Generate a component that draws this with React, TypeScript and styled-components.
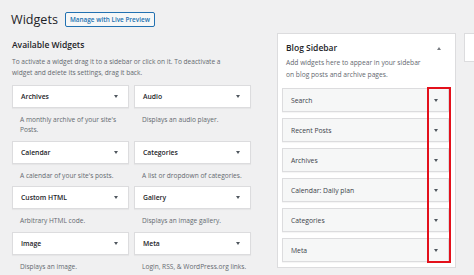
import React from 'react';
import styled, { createGlobalStyle } from 'styled-components';

const GlobalStyle = createGlobalStyle`
    html, body {
        margin: 0;
        padding: 0;
        background: #f0f0f1;
        overflow: hidden;
    }
    body {
        font-family: "Open Sans", "Liberation Sans", sans-serif;
        color: #1d2327;
    }
`;

const Page = styled.div`
    width: 474px;
    height: 275px;
    padding: 12px 0 0 11px;
    box-sizing: border-box;
    overflow: hidden;
`;

const Header = styled.div`
    display: flex;
    align-items: center;
    height: 15px;
`;

const Title = styled.h1`
    margin: 0 7px 0 0;
    font-size: 12.6px;
    font-weight: 400;
    line-height: 15px;
    color: #1d2327;
`;

const PreviewButton = styled.button`
    height: 15px;
    padding: 0 4px;
    border: 1px solid #2271b1;
    border-radius: 2px;
    background: #f6f7f7;
    color: #2271b1;
    font-family: inherit;
    font-size: 6.4px;
    font-weight: 600;
    line-height: 13px;
    box-sizing: border-box;
`;

const Columns = styled.div`
    display: flex;
    align-items: flex-start;
    margin-top: 6px;
`;

const LeftColumn = styled.div`
    width: 239px;
    flex-shrink: 0;
    padding: 6px 0 0 1px;
`;

const SectionTitle = styled.h2`
    margin: 0;
    font-size: 8.5px;
    font-weight: 600;
    line-height: 12px;
    color: #1d2327;
`;

const Intro = styled.p`
    margin: 5px 0 0;
    font-size: 6.6px;
    line-height: 11px;
    color: #646970;
`;

const WidgetGrid = styled.div`
    display: grid;
    grid-template-columns: 117px 117px;
    column-gap: 5px;
    margin-top: 7px;
`;

const WidgetCell = styled.div`
    display: flex;
    flex-direction: column;
`;

// $inSidebar: the greyer, slightly taller rows placed in a sidebar
const WidgetBox = styled.div<{ $inSidebar?: boolean }>`
    display: flex;
    align-items: center;
    justify-content: space-between;
    height: ${(p) => (p.$inSidebar ? '24px' : '23px')};
    padding: 0 10px 0 8px;
    border: 1px solid #dcdcde;
    background: ${(p) => (p.$inSidebar ? '#f6f7f7' : '#fff')};
    box-shadow: 0 1px 1px rgba(0, 0, 0, 0.04);
    box-sizing: border-box;
`;

const WidgetName = styled.span<{ $inSidebar?: boolean }>`
    font-size: 6.8px;
    font-weight: ${(p) => (p.$inSidebar ? 500 : 600)};
    color: ${(p) => (p.$inSidebar ? '#3c434a' : '#1d2327')};
    white-space: nowrap;
`;

const Arrow = styled.span<{ $up?: boolean }>`
    width: 0;
    height: 0;
    border-left: 2.5px solid transparent;
    border-right: 2.5px solid transparent;
    ${(p) =>
        p.$up
            ? 'border-bottom: 3px solid #787c82;'
            : 'border-top: 3px solid #50575e;'}
`;

const WidgetDesc = styled.p`
    margin: 0;
    padding: 7px 0 5.5px 8px;
    font-size: 6.6px;
    line-height: 10px;
    color: #646970;
`;

const SidebarArea = styled.div`
    display: flex;
    align-items: flex-start;
    gap: 8px;
    margin-left: 26px;
`;

const SidebarPanel = styled.div`
    position: relative;
    width: 179px;
    flex-shrink: 0;
    padding: 0 6px 5px 4px;
    border: 1px solid #dcdcde;
    background: #fff;
    box-sizing: border-box;
`;

const PanelHead = styled.div`
    display: flex;
    align-items: center;
    justify-content: space-between;
    padding: 8px 8px 0 4px;
`;

const PanelDesc = styled.p`
    margin: 3px 0 0 4px;
    font-size: 6.7px;
    line-height: 12px;
    color: #646970;
`;

const SidebarList = styled.div`
    display: flex;
    flex-direction: column;
    gap: 6px;
    margin-top: 7px;
`;

const CollapsedPanel = styled.div`
    width: 60px;
    height: 29px;
    border: 1px solid #dcdcde;
    background: #fff;
    box-sizing: border-box;
    flex-shrink: 0;
`;

const Highlight = styled.div`
    position: absolute;
    left: 149px;
    top: 53px;
    width: 24px;
    height: 176px;
    border: 2.5px solid #e3101b;
    box-sizing: border-box;
    pointer-events: none;
`;

const widgets = [
    { name: 'Archives', desc: "A monthly archive of your site's Posts." },
    { name: 'Audio', desc: 'Displays an audio player.' },
    { name: 'Calendar', desc: "A calendar of your site's posts." },
    { name: 'Categories', desc: 'A list or dropdown of categories.' },
    { name: 'Custom HTML', desc: 'Arbitrary HTML code.' },
    { name: 'Gallery', desc: 'Displays an image gallery.' },
    { name: 'Image', desc: 'Displays an image.' },
    { name: 'Meta', desc: 'Login, RSS, & WordPress.org links.' },
];

const sidebarWidgets = ['Search', 'Recent Posts', 'Archives', 'Calendar: Daily plan', 'Categories', 'Meta'];

const App: React.FC = () => {
    return (
        <>
            <GlobalStyle />
            <Page>
                <Header>
                    <Title>Widgets</Title>
                    <PreviewButton>Manage with Live Preview</PreviewButton>
                </Header>
                <Columns>
                    <LeftColumn>
                        <SectionTitle>Available Widgets</SectionTitle>
                        <Intro>
                            To activate a widget drag it to a sidebar or click on it. To deactivate a
                            <br />
                            widget and delete its settings, drag it back.
                        </Intro>
                        <WidgetGrid>
                            {widgets.map((w) => (
                                <WidgetCell key={w.name}>
                                    <WidgetBox>
                                        <WidgetName>{w.name}</WidgetName>
                                        <Arrow />
                                    </WidgetBox>
                                    <WidgetDesc>{w.desc}</WidgetDesc>
                                </WidgetCell>
                            ))}
                        </WidgetGrid>
                    </LeftColumn>
                    <SidebarArea>
                        <SidebarPanel>
                            <PanelHead>
                                <SectionTitle>Blog Sidebar</SectionTitle>
                                <Arrow $up />
                            </PanelHead>
                            <PanelDesc>
                                Add widgets here to appear in your sidebar
                                <br />
                                on blog posts and archive pages.
                            </PanelDesc>
                            <SidebarList>
                                {sidebarWidgets.map((name) => (
                                    <WidgetBox key={name} $inSidebar>
                                        <WidgetName $inSidebar>{name}</WidgetName>
                                        <Arrow />
                                    </WidgetBox>
                                ))}
                            </SidebarList>
                            <Highlight />
                        </SidebarPanel>
                        <CollapsedPanel />
                    </SidebarArea>
                </Columns>
            </Page>
        </>
    );
};

export default App;
